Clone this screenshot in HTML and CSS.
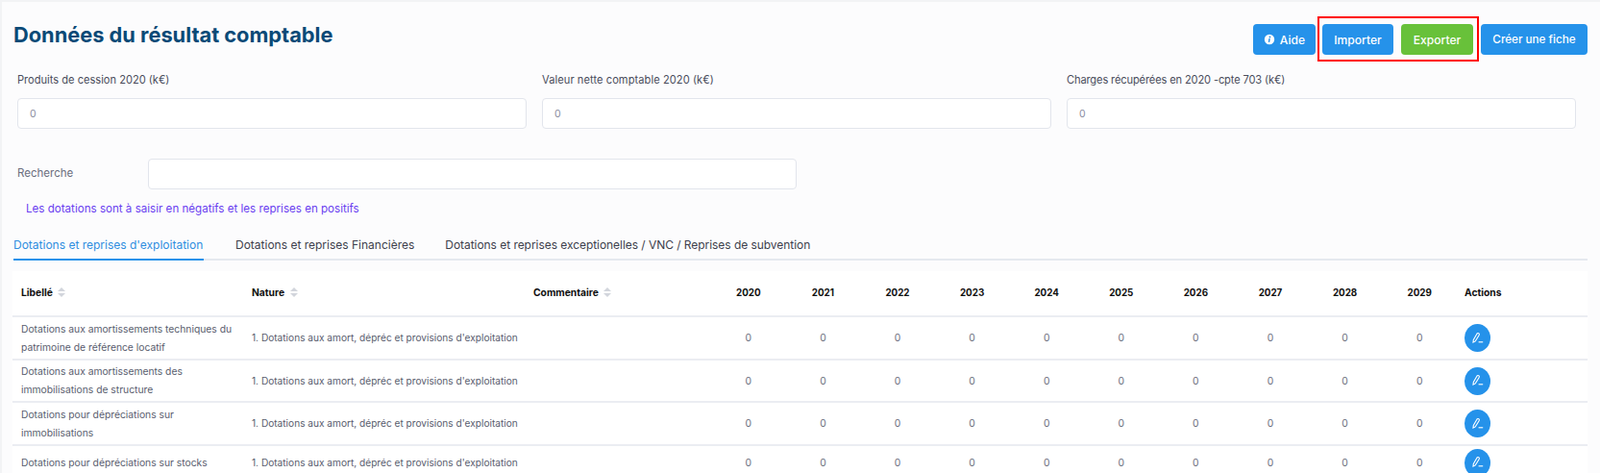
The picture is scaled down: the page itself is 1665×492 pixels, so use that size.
FILE: index.html
```html
<!DOCTYPE html>
<html lang="fr">
<head>
<meta charset="utf-8">
<title>Données du résultat comptable</title>
<link rel="stylesheet" href="styles.css">
</head>
<body>
<main class="page">
  <header class="top">
    <h1 class="title">Données du résultat comptable</h1>
    <div class="actions">
      <button class="btn btn-blue btn-aide"><svg class="info" viewBox="0 0 12 12"><circle cx="6" cy="6" r="5.2" fill="#fff"/><path d="M6.100 5.200 5.500 8.800" stroke="#2592ea" stroke-width="1.500" fill="none"/><circle cx="6.500" cy="3.500" r=".9" fill="#2592ea"/></svg>Aide</button>
      <div class="group">
        <button class="btn btn-blue btn-imp">Importer</button>
        <button class="btn btn-green btn-exp">Exporter</button>
        <span class="redbox"></span>
      </div>
      <button class="btn btn-blue btn-new">Créer une fiche</button>
    </div>
  </header>

  <section class="fields">
    <div class="field"><label class="lab">Produits de cession 2020 (k€)</label><input class="inp" value="0"></div>
    <div class="field"><label class="lab lab-wide">Valeur nette comptable 2020 (k€)</label><input class="inp" value="0"></div>
    <div class="field"><label class="lab lab-tight">Charges récupérées en 2020 -cpte 703 (k€)</label><input class="inp" value="0"></div>
  </section>

  <section class="search">
    <label class="search-lab">Recherche</label>
    <input class="inp search-inp">
  </section>
  <p class="note">Les dotations sont à saisir en négatifs et les reprises en positifs</p>

  <nav class="tabs">
    <a class="tab tab-active">Dotations et reprises d'exploitation</a>
    <a class="tab tab-2">Dotations et reprises Financières</a>
    <a class="tab tab-3">Dotations et reprises exceptionelles / VNC / Reprises de subvention</a>
  </nav>

  <table class="grid">
    <colgroup>
      <col class="c1"><col class="c2"><col class="c3">
      <col class="y"><col class="y"><col class="y"><col class="y"><col class="y"><col class="y"><col class="y"><col class="y"><col class="y"><col class="y">
      <col class="c4">
    </colgroup>
    <thead>
      <tr>
        <th>Libellé <svg class="sort" viewBox="0 0 8 10"><path d="M4 0 8 4H0zM0 6h8l-4 4z"/></svg></th>
        <th>Nature <svg class="sort" viewBox="0 0 8 10"><path d="M4 0 8 4H0zM0 6h8l-4 4z"/></svg></th>
        <th>Commentaire <svg class="sort" viewBox="0 0 8 10"><path d="M4 0 8 4H0zM0 6h8l-4 4z"/></svg></th>
        <th class="num">2020</th><th class="num">2021</th><th class="num">2022</th><th class="num">2023</th><th class="num">2024</th><th class="num">2025</th><th class="num">2026</th><th class="num">2027</th><th class="num">2028</th><th class="num">2029</th>
        <th class="act">Actions</th>
      </tr>
    </thead>
    <tbody>
      <tr class="tall">
        <td>Dotations aux amortissements techniques du patrimoine de référence locatif</td>
        <td class="nature">1. Dotations aux amort, dépréc et provisions d'exploitation</td><td></td>
        <td class="num">0</td><td class="num">0</td><td class="num">0</td><td class="num">0</td><td class="num">0</td><td class="num">0</td><td class="num">0</td><td class="num">0</td><td class="num">0</td><td class="num">0</td>
        <td class="act"><button class="edit"><svg viewBox="0 0 14 14"><path d="M6.900 2.200c.6-.8 1.600-.8 2.100-.3s.6 1.200.1 1.900L5.300 9.900 3 11l.3-2.600z"/><path d="M8.600 10.800h4.600"/></svg></button></td>
      </tr>
      <tr>
        <td>Dotations aux amortissements des immobilisations de structure</td>
        <td class="nature">1. Dotations aux amort, dépréc et provisions d'exploitation</td><td></td>
        <td class="num">0</td><td class="num">0</td><td class="num">0</td><td class="num">0</td><td class="num">0</td><td class="num">0</td><td class="num">0</td><td class="num">0</td><td class="num">0</td><td class="num">0</td>
        <td class="act"><button class="edit"><svg viewBox="0 0 14 14"><path d="M6.900 2.200c.6-.8 1.600-.8 2.100-.3s.6 1.200.1 1.900L5.300 9.900 3 11l.3-2.600z"/><path d="M8.600 10.800h4.600"/></svg></button></td>
      </tr>
      <tr class="tall">
        <td>Dotations pour dépréciations sur immobilisations</td>
        <td class="nature">1. Dotations aux amort, dépréc et provisions d'exploitation</td><td></td>
        <td class="num">0</td><td class="num">0</td><td class="num">0</td><td class="num">0</td><td class="num">0</td><td class="num">0</td><td class="num">0</td><td class="num">0</td><td class="num">0</td><td class="num">0</td>
        <td class="act"><button class="edit"><svg viewBox="0 0 14 14"><path d="M6.900 2.200c.6-.8 1.600-.8 2.100-.3s.6 1.200.1 1.900L5.300 9.900 3 11l.3-2.600z"/><path d="M8.600 10.800h4.600"/></svg></button></td>
      </tr>
      <tr class="short">
        <td>Dotations pour dépréciations sur stocks</td>
        <td class="nature">1. Dotations aux amort, dépréc et provisions d'exploitation</td><td></td>
        <td class="num">0</td><td class="num">0</td><td class="num">0</td><td class="num">0</td><td class="num">0</td><td class="num">0</td><td class="num">0</td><td class="num">0</td><td class="num">0</td><td class="num">0</td>
        <td class="act"><button class="edit"><svg viewBox="0 0 14 14"><path d="M6.900 2.200c.6-.8 1.600-.8 2.100-.3s.6 1.200.1 1.900L5.300 9.900 3 11l.3-2.600z"/><path d="M8.600 10.800h4.600"/></svg></button></td>
      </tr>
    </tbody>
  </table>
</main>
</body>
</html>
```
FILE: styles.css
```css
* { box-sizing: border-box; }
html, body { margin: 0; height: 100%; overflow: hidden; }
body {
  background: #f2f3f5;
  padding: 2px 0 0 2px;
  font-family: Inter, "Noto Sans", "Liberation Sans", sans-serif;
  color: #595d6e;
}
.page {
  background: #fcfcfd;
  height: 490px;
  overflow: hidden;
  padding-top: 23px;
}
.top {
  display: flex;
  justify-content: space-between;
  align-items: flex-start;
  padding: 0 13px 0 12px;
  height: 32px;
}
.title {
  margin: 0;
  font-size: 21.8px;
  line-height: 22px;
  font-weight: 700;
  color: #0b4a77;
}
.actions { display: flex; gap: 8px; }
.group { display: flex; gap: 8px; position: relative; }
.redbox {
  position: absolute;
  left: -5px; right: -6px; top: -8px; bottom: -7px;
  border: 2px solid #f00;
  pointer-events: none;
}
.btn {
  height: 32px;
  border: 0;
  border-radius: 4px;
  padding: 0;
  font: 500 12.1px Inter, "Liberation Sans", sans-serif;
  color: #fff;
  display: flex;
  align-items: center;
  justify-content: center;
}
.btn-blue { background: #2592ea; }
.btn-green { background: #68c13a; }
.btn-aide { width: 65px; gap: 5px; margin-right: -1px; }
.btn-imp { width: 74px; }
.btn-exp { width: 75px; }
.btn-new { width: 111px; font-size: 11.7px; }
.info { width: 12px; height: 12px; }
.fields {
  display: grid;
  grid-template-columns: repeat(3, 530px);
  gap: 16px;
  padding-left: 16px;
  margin-top: 17px;
}
.lab {
  display: block;
  font-size: 11.1px;
  line-height: 18px;
  color: #4a4d5c;
  margin-bottom: 10px;
}
.lab-wide { letter-spacing: .07px; }
.lab-tight { letter-spacing: -.13px; }
.inp {
  display: block;
  width: 100%;
  height: 32px;
  border: 1px solid #e2e5ec;
  border-radius: 4px;
  background: #fff;
  padding: 0 12px;
  font: 400 10.5px Inter, "Liberation Sans", sans-serif;
  color: #8a8d9f;
  outline: 0;
}
.search {
  display: flex;
  align-items: center;
  margin-top: 31px;
  padding-left: 16px;
}
.search-lab { width: 136px; padding-bottom: 2px; font-size: 11.5px; color: #6b6e7d; }
.search-inp { width: 675px; }
.note {
  margin: 11px 0 0 25px;
  font-size: 11.6px;
  line-height: 18px;
  color: #6a3ff0;
}
.tabs {
  display: flex;
  margin: 14px 13px 0 12px;
  height: 31px;
  border-bottom: 2px solid #e5e9ef;
}
.tab {
  font-size: 12px;
  line-height: 29px;
  color: #3c3f4c;
  height: 31px;
  white-space: nowrap;
}
.tab-active {
  width: 198px;
  color: #2f8ee0;
  border-bottom: 2px solid #2592ea;
}
.tab-2 { margin-left: 33px; }
.tab-3 { margin-left: 32px; letter-spacing: -.05px; }
.grid {
  width: 1639px;
  margin: 11px 0 0 11px;
  table-layout: fixed;
  border-collapse: collapse;
  background: #fff;
}
.c1 { width: 240px; }
.c2 { width: 293px; }
.c3 { width: 194px; }
.y { width: 77.6px; }
.c4 { width: 136px; }
th {
  height: 47px;
  padding: 0 9px 2px;
  text-align: left;
  font-size: 10.3px;
  font-weight: 700;
  color: #111;
  border-bottom: 2px solid #ebedf2;
  white-space: nowrap;
}
th.num { font-size: 9.8px; }
td {
  height: 44px;
  padding: 2px 9px;
  font-size: 10.3px;
  line-height: 19px;
  color: #595d6e;
  border-bottom: 2px solid #ebedf2;
}
.tall td { height: 45px; }
.short td { height: 36px; }
.num { text-align: center; padding-left: 0; padding-right: 0; }
td.num { color: #6b6e7d; }
.nature { white-space: nowrap; font-size: 10.15px; }
.act { padding-left: 8px; }
.sort { width: 8px; height: 10px; margin-left: 3px; vertical-align: -1px; fill: #d2d5dc; }
.edit {
  display: flex;
  align-items: center;
  justify-content: center;
  width: 27px;
  height: 29px;
  padding: 0;
  border: 0;
  border-radius: 50%;
  background: #2592ea;
}
.edit svg {
  width: 14px;
  height: 14px;
  fill: none;
  stroke: #fff;
  stroke-width: 1.1;
}
```
